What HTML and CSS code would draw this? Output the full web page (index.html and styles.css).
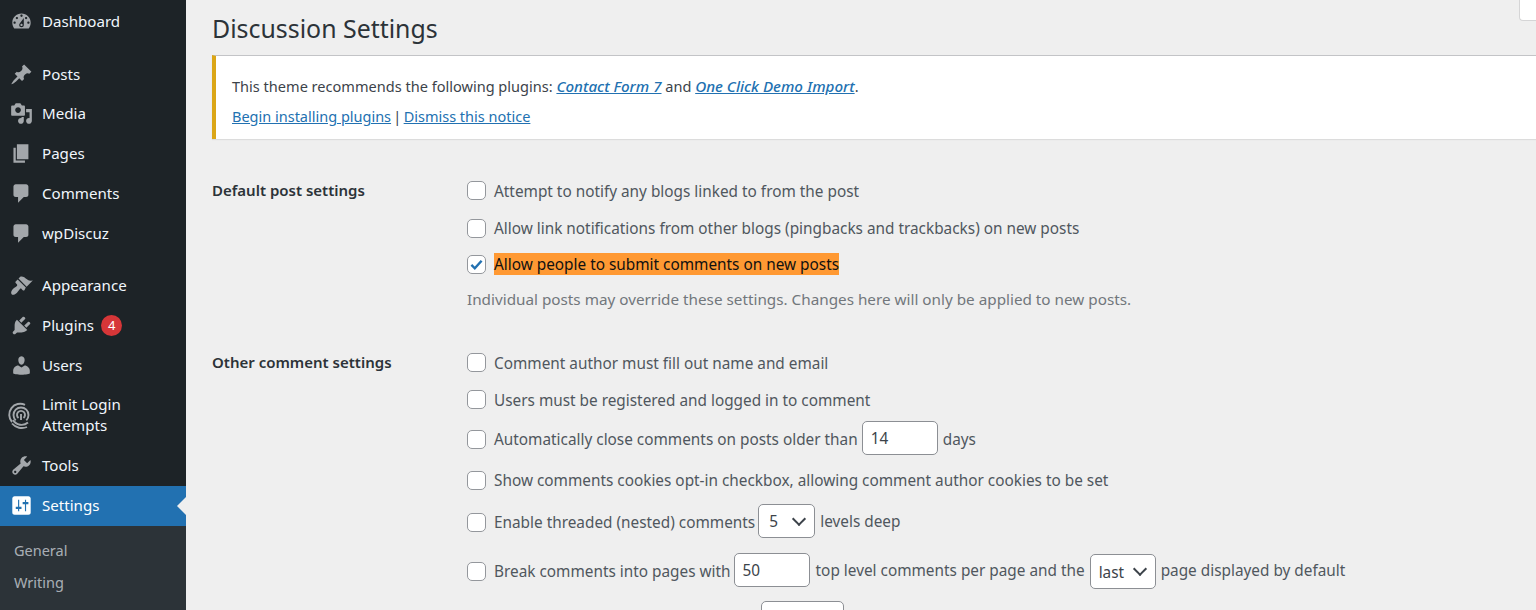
FILE: index.html
```html
<!DOCTYPE html>
<html lang="en">
<head>
<meta charset="utf-8">
<title>Discussion Settings</title>
<link rel="stylesheet" href="styles.css">
</head>
<body>
<div class="shell">
  <nav class="side">
    <ul class="menu">
      <li class="item"><svg class="ico" viewBox="0 0 20 20"><path d="M3.76 16h12.48c1.1-1.37 1.76-3.11 1.76-5 0-4.42-3.58-8-8-8s-8 3.58-8 8c0 1.89.66 3.63 1.76 5zM10 4c.55 0 1 .45 1 1s-.45 1-1 1-1-.45-1-1 .45-1 1-1zM6 6c.55 0 1 .45 1 1s-.45 1-1 1-1-.45-1-1 .45-1 1-1zm8 0c.55 0 1 .45 1 1s-.45 1-1 1-1-.45-1-1 .45-1 1-1zm-5.37 5.55L12 7v6c0 1.1-.9 2-2 2s-2-.9-2-2c0-.57.24-1.08.63-1.45zM4 10c.55 0 1 .45 1 1s-.45 1-1 1-1-.45-1-1 .45-1 1-1zm12 0c.55 0 1 .45 1 1s-.45 1-1 1-1-.45-1-1 .45-1 1-1zm-5 3c0-.55-.45-1-1-1s-1 .45-1 1 .45 1 1 1 1-.45 1-1z"/></svg><span>Dashboard</span></li>
      <li class="item gap"><svg class="ico" viewBox="0 0 20 20"><path d="M10.44 3.02l1.82-1.82 6.36 6.35-1.83 1.82c-1.05-.68-2.48-.57-3.41.36l-.75.75c-.92.93-1.04 2.35-.35 3.41l-1.83 1.82-2.41-2.41-2.8 2.79c-.42.42-3.38 2.71-3.8 2.29s1.86-3.39 2.28-3.81l2.79-2.79L4.1 9.36l1.83-1.82c1.05.69 2.48.57 3.4-.36l.75-.75c.93-.92 1.05-2.35.36-3.41z"/></svg><span>Posts</span></li>
      <li class="item"><svg class="ico" viewBox="0 0 20 20"><path d="M13 11V4c0-.55-.45-1-1-1h-1.67L9 1H5L3.67 3H2c-.55 0-1 .45-1 1v7c0 .55.45 1 1 1h10c.55 0 1-.45 1-1zM7 4.5c1.38 0 2.5 1.12 2.5 2.5S8.38 9.5 7 9.5 4.5 8.38 4.5 7 5.62 4.5 7 4.5zM14 6h5v10.5c0 1.38-1.12 2.5-2.5 2.5S14 17.88 14 16.5s1.12-2.5 2.5-2.5c.17 0 .34.02.5.05V9h-3V6zm-4 8.05V13h2v3.5c0 1.38-1.12 2.5-2.5 2.5S7 17.88 7 16.5 8.12 14 9.5 14c.17 0 .34.02.5.05z"/></svg><span>Media</span></li>
      <li class="item"><svg class="ico" viewBox="0 0 20 20"><path d="M6 15V2h10v13H6zm-1 1h8v2H3V5h2v11z"/></svg><span>Pages</span></li>
      <li class="item"><svg class="ico" viewBox="0 0 20 20"><path d="M5 2h9c1.1 0 2 .9 2 2v7c0 1.1-.9 2-2 2h-2l-5 5v-5H5c-1.1 0-2-.9-2-2V4c0-1.1.9-2 2-2z"/></svg><span>Comments</span></li>
      <li class="item"><svg class="ico" viewBox="0 0 20 20"><path d="M5 2h9c1.1 0 2 .9 2 2v7c0 1.1-.9 2-2 2h-2l-5 5v-5H5c-1.1 0-2-.9-2-2V4c0-1.1.9-2 2-2z"/></svg><span>wpDiscuz</span></li>
      <li class="item gap"><svg class="ico" viewBox="0 0 20 20"><path d="M14.48 11.06L7.41 3.99l1.5-1.5c.5-.56 2.3-.47 3.51.32 1.21.8 1.43 1.28 2.91 2.1 1.18.64 2.45 1.26 4.45.85zm-.71.71L6.7 4.7 4.93 6.47c-.39.39-.39 1.02 0 1.41l1.06 1.06c.39.39.39 1.03 0 1.42-.6.6-1.43 1.11-2.21 1.69-.35.26-.7.53-1.01.84-1.43 1.43-2.4 3.64-1.35 4.68 1.04 1.05 3.25.08 4.68-1.35.31-.31.58-.66.84-1.01.58-.78 1.09-1.61 1.69-2.21.39-.39 1.03-.39 1.42 0l1.06 1.06c.39.39 1.02.39 1.41 0z"/></svg><span>Appearance</span></li>
      <li class="item"><svg class="ico" viewBox="0 0 20 20"><path d="M13.11 4.36L9.87 7.6 8 5.73l3.24-3.24c.35-.34 1.05-.2 1.56.32.52.51.66 1.21.31 1.55zm-8 1.77l.91-1.12 9.01 9.01-1.19.84c-.71.71-2.63 1.16-3.82 1.16H6.14L4.9 17.26c-.59.59-1.54.59-2.12 0-.59-.58-.59-1.53 0-2.12l1.24-1.24v-3.88c0-1.13.4-3.19 1.09-3.89zm7.26 3.97l3.24-3.24c.34-.35 1.04-.21 1.55.31.52.51.66 1.21.31 1.55l-3.24 3.25z"/></svg><span>Plugins</span><b class="badge">4</b></li>
      <li class="item"><svg class="ico" viewBox="0 0 20 20"><path d="M10 9.25c-2.27 0-2.73-3.44-2.73-3.44C7 4.02 7.82 2 9.97 2c2.16 0 2.98 2.02 2.71 3.81 0 0-.41 3.44-2.68 3.44zm0 2.57L12.72 10c2.39 0 4.52 2.33 4.52 4.53v2.49s-3.65 1.13-7.24 1.13c-3.65 0-7.24-1.13-7.24-1.13v-2.49c0-2.25 1.94-4.48 4.47-4.48z"/></svg><span>Users</span></li>
      <li class="item tall"><svg class="ico wide" viewBox="0 0 24 32" fill="none"><g class="arcs"><path d="M11.5 19A4 4 0 1 1 16.5 19M14 15v6"/><path d="M8.7 21.3A7.5 7.5 0 1 1 19.3 21.3"/><path d="M18 5.8A11 11 0 0 0 5 23"/><path d="M6 21A10 10 0 0 0 21 23.5"/><path d="M5 24.5A13 13 0 0 0 20 28"/></g></svg><span>Limit Login<br>Attempts</span></li>
      <li class="item"><svg class="ico" viewBox="0 0 20 20"><path d="M16.68 9.77c-1.34 1.34-3.3 1.67-4.95.99l-5.41 6.52c-.99.99-2.59.99-3.58 0s-.99-2.59 0-3.57l6.52-5.42c-.68-1.65-.35-3.61.99-4.95 1.28-1.28 3.12-1.62 4.72-1.06l-2.89 2.89 2.82 2.82 2.86-2.87c.53 1.58.18 3.39-1.08 4.65zM3.81 16.21c.4.39 1.04.39 1.43 0 .4-.4.4-1.04 0-1.43-.39-.4-1.03-.4-1.43 0-.39.39-.39 1.03 0 1.43z"/></svg><span>Tools</span></li>
      <li class="item current"><svg class="ico" viewBox="0 0 20 20"><path fill-rule="evenodd" d="M4 2h12c1.1 0 2 .9 2 2v12c0 1.1-.9 2-2 2H4c-1.100 0-2-.9-2-2V4c0-1.100.9-2 2-2zM7 5v6H5v2h2v2h1v-2h2v-2H8V5zM13 5v2h-2v2h2v6h1V9h2V7h-2V5z"/></svg><span>Settings</span></li>
    </ul>
    <ul class="sub">
      <li>General</li>
      <li>Writing</li>
      <li>Reading</li>
    </ul>
  </nav>
  <main class="main">
    <div class="tab"></div>
    <h1 class="title">Discussion Settings</h1>
    <div class="notice">
      <p>This theme recommends the following plugins: <a class="em"><em>Contact Form 7</em></a> and <a class="em"><em>One Click Demo Import</em></a>.</p>
      <p class="actions"><a>Begin installing plugins</a> <span class="sep">|</span> <a>Dismiss this notice</a></p>
    </div>
    <section class="group g1">
      <h2 class="label">Default post settings</h2>
      <div class="opts">
        <label class="opt h37 up"><i class="cb"></i><span>Attempt to notify any blogs linked to from the post</span></label>
        <label class="opt h36"><i class="cb"></i><span>Allow link notifications from other blogs (pingbacks and trackbacks) on new posts</span></label>
        <label class="opt h36"><i class="cb on"><svg viewBox="0 0 20 20"><path d="M4 10.5l4 4 8-9" /></svg></i><span class="hl">Allow people to submit comments on new posts</span></label>
        <p class="desc">Individual posts may override these settings. Changes here will only be applied to new posts.</p>
      </div>
    </section>
    <section class="group">
      <h2 class="label">Other comment settings</h2>
      <div class="opts">
        <label class="opt h37 up"><i class="cb"></i><span>Comment author must fill out name and email</span></label>
        <label class="opt h37 up"><i class="cb"></i><span>Users must be registered and logged in to comment</span></label>
        <label class="opt h40"><i class="cb"></i><span>Automatically close comments on posts older than</span><span class="field f76 f14">14</span><span>days</span></label>
        <label class="opt h42"><i class="cb"></i><span>Show comments cookies opt-in checkbox, allowing comment author cookies to be set</span></label>
        <label class="opt h42"><i class="cb"></i><span>Enable threaded (nested) comments</span><span class="field sel s57">5</span><span class="lift">levels deep</span></label>
        <label class="opt h56"><i class="cb"></i><span>Break comments into pages with</span><span class="field f76 f50">50</span><span class="lift">top level comments per page and the</span><span class="field sel s66">last</span><span class="lift">page displayed by default</span></label>
        <label class="opt last"><span>Comments should be displayed with the</span><span class="field sel s83">older</span><span>comments at the top of each page</span></label>
      </div>
    </section>
  </main>
</div>
</body>
</html>
```
FILE: styles.css
```css
* { box-sizing: border-box; }
html, body { margin: 0; height: 610px; overflow: hidden; }
body { background: #efefef; color: #50575e; font-family: "Noto Sans", "Open Sans", sans-serif; font-size: 15.35px; }
ul, p, h1, h2 { margin: 0; padding: 0; list-style: none; }
.shell { display: flex; height: 610px; overflow: hidden; }

.side { width: 186px; flex: none; background: #1d2327; color: #f0f6fc; padding-top: 2px; display: flex; flex-direction: column; }
.item { height: 39.8px; display: flex; align-items: center; gap: 9px; padding-left: 10px; position: relative; font-size: 15.1px; line-height: 21px; }
.item.gap { margin-top: 12.4px; }
.item.tall { height: 61px; }
.ico { width: 23px; height: 23px; flex: none; fill: #a3a7ab; }
.ico.wide { margin-left: -3px; margin-right: 2px; height: 32px; width: 24px; }
.arcs path { stroke: #a3a7ab; stroke-width: 1.9; fill: none; }
.badge { width: 21px; height: 21px; border-radius: 50%; background: #d63638; color: #fff; font-weight: 400; font-size: 13px; display: flex; align-items: center; justify-content: center; margin-left: -2px; }
.current { background: #2271b1; color: #fff; }
.current .ico { fill: #fff; }
.current::after { content: ""; position: absolute; right: 0; top: 50%; margin-top: -9px; border: 9px solid transparent; border-right-color: #efefef; border-left-width: 0; }
.sub { background: #2c3338; flex: 1; padding: 8px 0 0 14px; color: rgba(240, 246, 252, .65); font-size: 14.5px; }
.sub li { height: 32.6px; display: flex; align-items: center; }

.main { flex: 1; min-width: 0; padding: 0 0 0 26px; position: relative; }
.tab { position: absolute; top: 0; right: 0; width: 17px; height: 21px; background: #fff; border: 1px solid #d5d5d6; border-top: 0; border-right: 0; border-bottom-left-radius: 4px; }
.title { font-size: 24.9px; font-weight: 400; color: #2c3338; line-height: 36px; padding-top: 10px; height: 55px; }
.notice { background: #fff; border-top: 1px solid #c3c4c7; border-left: 4px solid #dba617; height: 84px; padding: 20px 0 0 16px; box-shadow: 0 1px 1px rgba(0, 0, 0, .08); color: #3c434a; font-size: 14.55px; display: flex; flex-direction: column; gap: 9px; }
.notice p { line-height: 21px; }
.notice .actions { font-size: 14.5px; }
.notice a { color: #2271b1; text-decoration: underline; }
.notice .em { font-weight: 500; font-size: 15.2px; }
.sep { margin: 0 -1.5px; }

.group { display: flex; }
.g1 { margin-top: 34px; height: 172px; }
.label { width: 255px; flex: none; font-size: 15px; font-weight: 600; color: #2c3338; line-height: 21px; padding-top: 7px; }
.opts { display: flex; flex-direction: column; flex: 1; min-width: 0; }
.opt { display: flex; align-items: center; gap: 5px; white-space: nowrap; flex: none; }
.up { padding-bottom: 2px; }
.h36 { height: 36px; }
.h37 { height: 37px; }
.h40 { height: 40px; }
.h42 { height: 42px; }
.h56 { height: 56px; }
.last { height: 40px; }
.cb { width: 19px; height: 19px; flex: none; background: #fff; border: 1px solid #94979c; border-radius: 5px; margin-right: 3px; display: block; }
.cb svg { display: block; width: 17px; height: 17px; fill: none; stroke: #2271b1; stroke-width: 2.8; }
.hl { background: #ff9933; color: #111; line-height: 22px; }
.desc { color: #72777c; line-height: 21px; padding-top: 7px; font-size: 15.27px; }
.field { display: flex; align-items: center; height: 34px; background: #fff; border: 1px solid #8c8f94; border-radius: 5px; padding-left: 8px; color: #3c434a; position: relative; margin-top: -2px; }
.f76 { width: 76px; }
.f14 { margin-left: -1px; }
.f50 { margin: -2px 1px 0 -2px; }
.lift { margin-top: -3px; }
.sel::after { content: ""; position: absolute; right: 10px; top: 9px; width: 8px; height: 8px; border: solid #3c434a; border-width: 0 2px 2px 0; transform: rotate(45deg); }
.s57 { width: 57px; padding-left: 10px; margin: -2px 0 0 -2px; }
.s66 { width: 66px; height: 35px; margin: 1px 0 0 0; }
.s83 { width: 83px; }
```
